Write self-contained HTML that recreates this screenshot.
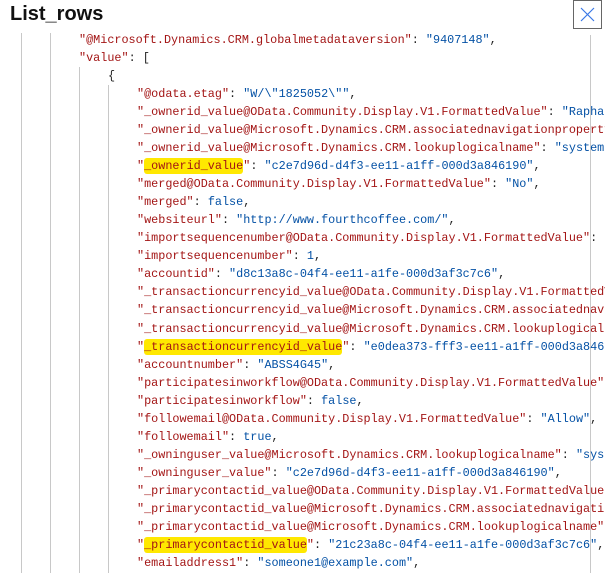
<!DOCTYPE html>
<html><head><style>
body{margin:0;width:605px;height:573px;overflow:hidden;background:#fff;position:relative;font-family:"Liberation Sans",sans-serif}
.t{position:absolute;left:10px;top:3px;font-size:20px;font-weight:bold;color:#111}
.x{position:absolute;left:573px;top:0;width:29px;height:29px;border:1px solid #666;box-sizing:border-box}
.g{position:absolute;width:1px;background:#c8c8c8}
.code{position:absolute;left:0;top:31px;width:605px;height:542px;overflow:hidden;font-family:"Liberation Mono",monospace;font-size:11.8px;line-height:18.03px;white-space:pre;color:#222}
.k{color:#a31515}.s{color:#0451a5}
.h{background:#ffe800;border-radius:3px;padding:1px 0}
</style></head><body>
<div class="t">List_rows</div>
<div class="x"><svg width="27" height="27" viewBox="0 0 27 27"><path d="M7 7L20 20M20 7L7 20" stroke="#3a78e6" stroke-width="1.2"/></svg></div>
<div class="g" style="left:21px;top:33px;height:540px"></div>
<div class="g" style="left:50px;top:33px;height:540px"></div>
<div class="g" style="left:79px;top:67px;height:506px"></div>
<div class="g" style="left:108px;top:85px;height:488px"></div>
<div class="g" style="left:590px;top:35px;height:538px"></div>
<div class="code"><span style="padding-left:79px"></span><span class="k">"@Microsoft.Dynamics.CRM.globalmetadataversion"</span>: <span class="s">"9407148"</span>,
<span style="padding-left:79px"></span><span class="k">"value"</span>: [
<span style="padding-left:108px"></span>{
<span style="padding-left:137px"></span><span class="k">"@odata.etag"</span>: <span class="s">"W/\"1825052\""</span>,
<span style="padding-left:137px"></span><span class="k">"_ownerid_value@OData.Community.Display.V1.FormattedValue"</span>: <span class="s">"Raphael"</span>
<span style="padding-left:137px"></span><span class="k">"_ownerid_value@Microsoft.Dynamics.CRM.associatednavigationproperty"</span>
<span style="padding-left:137px"></span><span class="k">"_ownerid_value@Microsoft.Dynamics.CRM.lookuplogicalname"</span>: <span class="s">"systemuser"</span>
<span style="padding-left:137px"></span><span class="k">"<span class="h">_ownerid_value</span>"</span>: <span class="s">"c2e7d96d-d4f3-ee11-a1ff-000d3a846190"</span>,
<span style="padding-left:137px"></span><span class="k">"merged@OData.Community.Display.V1.FormattedValue"</span>: <span class="s">"No"</span>,
<span style="padding-left:137px"></span><span class="k">"merged"</span>: <span class="s">false</span>,
<span style="padding-left:137px"></span><span class="k">"websiteurl"</span>: <span class="s">"http://www.fourthcoffee.com/"</span>,
<span style="padding-left:137px"></span><span class="k">"importsequencenumber@OData.Community.Display.V1.FormattedValue"</span>: <span class="s">"1"</span>
<span style="padding-left:137px"></span><span class="k">"importsequencenumber"</span>: <span class="s">1</span>,
<span style="padding-left:137px"></span><span class="k">"accountid"</span>: <span class="s">"d8c13a8c-04f4-ee11-a1fe-000d3af3c7c6"</span>,
<span style="padding-left:137px"></span><span class="k">"_transactioncurrencyid_value@OData.Community.Display.V1.FormattedValue"</span>
<span style="padding-left:137px"></span><span class="k">"_transactioncurrencyid_value@Microsoft.Dynamics.CRM.associatednavigationproperty"</span>
<span style="padding-left:137px"></span><span class="k">"_transactioncurrencyid_value@Microsoft.Dynamics.CRM.lookuplogicalname"</span>
<span style="padding-left:137px"></span><span class="k">"<span class="h">_transactioncurrencyid_value</span>"</span>: <span class="s">"e0dea373-fff3-ee11-a1ff-000d3a846190"</span>
<span style="padding-left:137px"></span><span class="k">"accountnumber"</span>: <span class="s">"ABSS4G45"</span>,
<span style="padding-left:137px"></span><span class="k">"participatesinworkflow@OData.Community.Display.V1.FormattedValue"</span>: <span class="s">"No"</span>
<span style="padding-left:137px"></span><span class="k">"participatesinworkflow"</span>: <span class="s">false</span>,
<span style="padding-left:137px"></span><span class="k">"followemail@OData.Community.Display.V1.FormattedValue"</span>: <span class="s">"Allow"</span>,
<span style="padding-left:137px"></span><span class="k">"followemail"</span>: <span class="s">true</span>,
<span style="padding-left:137px"></span><span class="k">"_owninguser_value@Microsoft.Dynamics.CRM.lookuplogicalname"</span>: <span class="s">"systemuser"</span>
<span style="padding-left:137px"></span><span class="k">"_owninguser_value"</span>: <span class="s">"c2e7d96d-d4f3-ee11-a1ff-000d3a846190"</span>,
<span style="padding-left:137px"></span><span class="k">"_primarycontactid_value@OData.Community.Display.V1.FormattedValue"</span>
<span style="padding-left:137px"></span><span class="k">"_primarycontactid_value@Microsoft.Dynamics.CRM.associatednavigationproperty"</span>
<span style="padding-left:137px"></span><span class="k">"_primarycontactid_value@Microsoft.Dynamics.CRM.lookuplogicalname"</span>
<span style="padding-left:137px"></span><span class="k">"<span class="h">_primarycontactid_value</span>"</span>: <span class="s">"21c23a8c-04f4-ee11-a1fe-000d3af3c7c6"</span>,
<span style="padding-left:137px"></span><span class="k">"emailaddress1"</span>: <span class="s">"someone1@example.com"</span>,
</div>
</body></html>
